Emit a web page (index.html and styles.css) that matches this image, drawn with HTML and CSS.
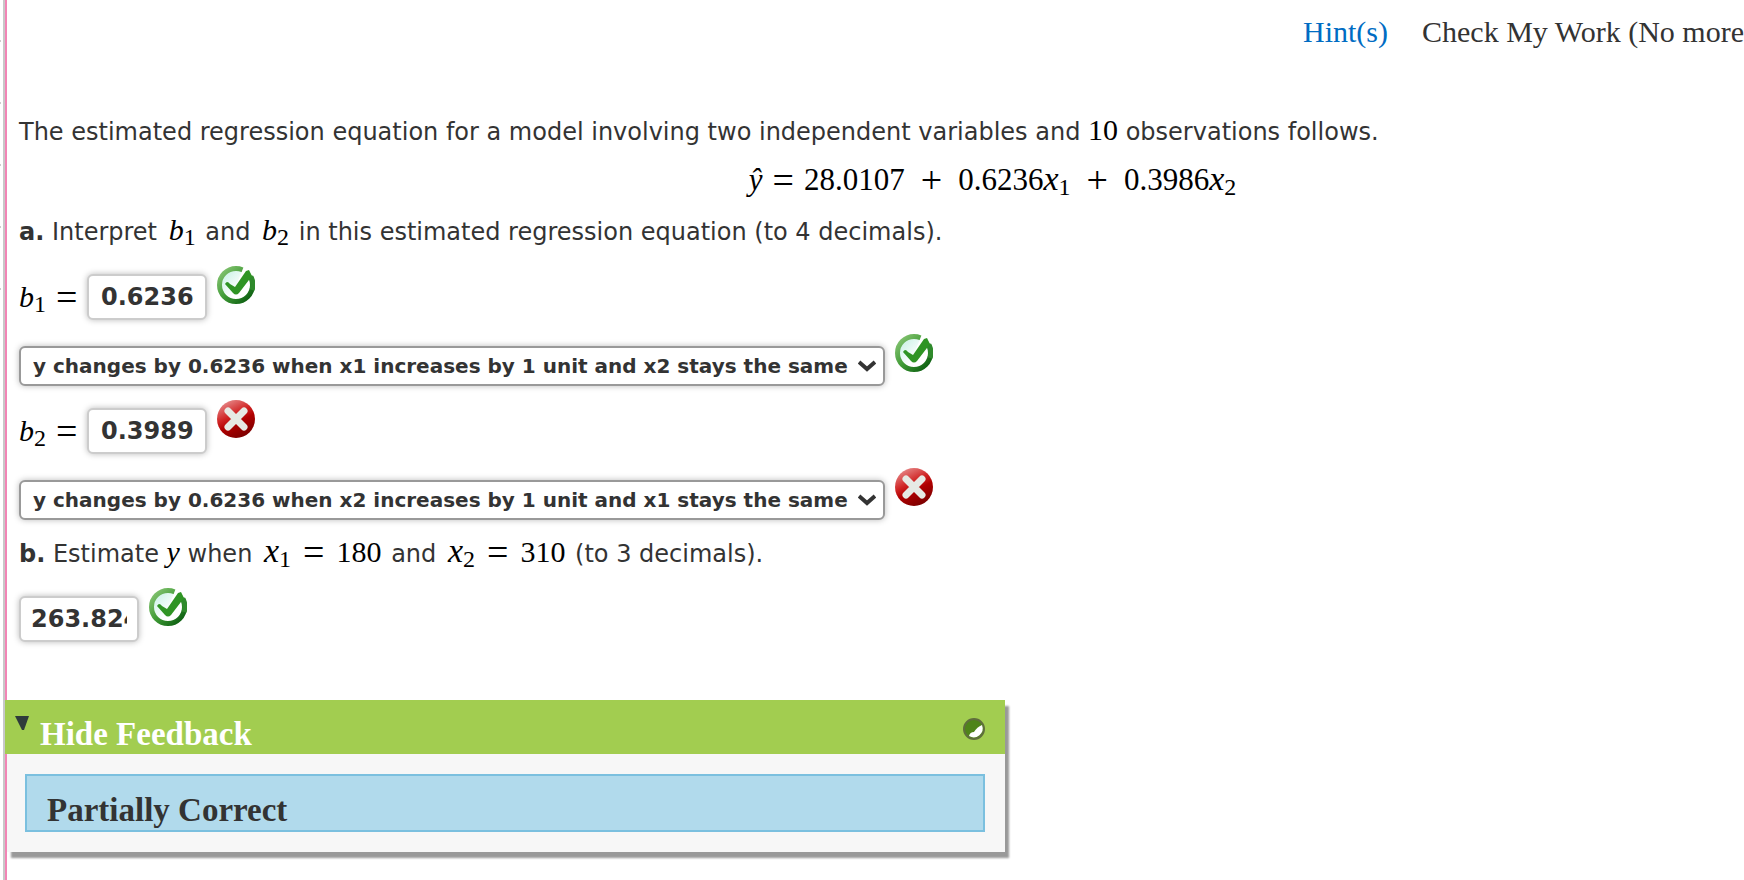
FILE: index.html
```
<!DOCTYPE html>
<html lang="en">
<head>
  <meta charset="UTF-8">
  <title>Regression Equation - Check My Work</title>
  <link rel="stylesheet" href="styles.css">
</head>
<body>

<!-- shared icon shapes -->
<svg class="defs" aria-hidden="true">
  <defs>
    <linearGradient id="greenRing" x1="0" y1="0" x2="1" y2="1">
      <stop offset="0" stop-color="#8cc878"/>
      <stop offset="0.5" stop-color="#3f9a35"/>
      <stop offset="1" stop-color="#05560c"/>
    </linearGradient>
    <linearGradient id="mint" x1="0" y1="0" x2="1" y2="1">
      <stop offset="0" stop-color="#bdeee0"/>
      <stop offset="0.6" stop-color="#ffffff"/>
    </linearGradient>
    <linearGradient id="redBall" x1="0.2" y1="0" x2="0.7" y2="1">
      <stop offset="0" stop-color="#e89090"/>
      <stop offset="0.4" stop-color="#d02424"/>
      <stop offset="0.6" stop-color="#b00000"/>
      <stop offset="1" stop-color="#780000"/>
    </linearGradient>
    <symbol id="right" viewBox="0 0 38 38">
      <circle cx="19" cy="19" r="16.5" fill="url(#mint)" stroke="url(#greenRing)" stroke-width="5"/>
      <path d="M27 0L38 0L38 6L35 9L22 25L19 20Z" fill="#fff"/>
      <path d="M34 11A17 17 0 0 1 35 24" fill="none" stroke="#2f8a2c" stroke-width="5"/>
      <path d="M8 18Q10 14 13 18L18 21L29 5L32 4L35 10L22 27Q19 30 16 27Z" fill="#2f9424"/>
    </symbol>
    <symbol id="wrong" viewBox="0 0 38 38">
      <circle cx="19" cy="19" r="19" fill="url(#redBall)"/>
      <path d="M11 11L27 27M27 11L11 27" stroke="#e6eae4" stroke-width="7" stroke-linecap="round"/>
    </symbol>
  </defs>
</svg>

<div class="page">
  <div class="gutter"></div>

  <main class="content">
    <header class="toolbar">
      <a href="#">Hint(s)</a>
      <span>Check My Work (No more</span>
    </header>

    <form class="question">
      <p>The estimated regression equation for a model involving two independent variables and <span class="math">10</span> observations follows.</p>
      <p class="equation math"><i>ŷ</i><span class="eq">=</span>28.0107<span class="op">+</span>0.6236<i class="x">x</i><sub>1</sub><span class="op">+</span>0.3986<i class="x">x</i><sub>2</sub></p>
      <p><b>a.</b> Interpret <span class="math term"><i>b</i><sub>1</sub></span> and <span class="math term"><i>b</i><sub>2</sub></span> in this estimated regression equation (to 4 decimals).</p>

      <div class="answers">
        <div class="row">
          <label class="math" for="b1"><i>b</i><sub>1</sub><span class="eq">=</span></label>
          <input type="text" id="b1" value="0.6236">
          <svg class="mark" role="img" aria-label="Correct"><use href="#right"/></svg>
        </div>
        <div class="row">
          <div class="select-box">
            <select aria-label="Interpretation of b1">
              <option>y changes by 0.6236 when x1 increases by 1 unit and x2 stays the same</option>
            </select>
            <svg class="chevron" viewBox="0 0 18 12"><path d="M1 2L9 9L17 2"/></svg>
          </div>
          <svg class="mark" role="img" aria-label="Correct"><use href="#right"/></svg>
        </div>
        <div class="row">
          <label class="math" for="b2"><i>b</i><sub>2</sub><span class="eq">=</span></label>
          <input type="text" id="b2" value="0.3989">
          <svg class="mark" role="img" aria-label="Incorrect"><use href="#wrong"/></svg>
        </div>
        <div class="row">
          <div class="select-box">
            <select aria-label="Interpretation of b2">
              <option>y changes by 0.6236 when x2 increases by 1 unit and x1 stays the same</option>
            </select>
            <svg class="chevron" viewBox="0 0 18 12"><path d="M1 2L9 9L17 2"/></svg>
          </div>
          <svg class="mark" role="img" aria-label="Incorrect"><use href="#wrong"/></svg>
        </div>
      </div>

      <p><b>b.</b> Estimate <i class="math">y</i> when <span class="math term"><i class="x">x</i><sub>1</sub><span class="eq">=</span>180</span> and <span class="math term"><i class="x">x</i><sub>2</sub><span class="eq">=</span>310</span> (to 3 decimals).</p>

      <div class="answers">
        <div class="row">
          <input type="text" aria-label="Estimate of y" value="263.824">
          <svg class="mark" role="img" aria-label="Correct"><use href="#right"/></svg>
        </div>
      </div>
    </form>

    <section class="feedback">
      <button type="button" class="feedback-head">
        <svg class="arrow" viewBox="0 0 14 14"><path d="M0 0H14L9 14H7Z"/></svg>
        <span>Hide Feedback</span>
        <svg class="partial" viewBox="0 0 22 22">
          <circle cx="11" cy="11" r="10" fill="#4f8419" stroke="#5f6e3c" stroke-width="2"/>
          <path d="M19 7A9 9 0 0 1 6 18Q7 14 11 14Q14 9 19 7Z" fill="#fff"/>
        </svg>
      </button>
      <div class="feedback-body">
        <h3>Partially Correct</h3>
      </div>
    </section>
  </main>
</div>

</body>
</html>
```
FILE: styles.css
```
* {
  box-sizing: border-box;
}

body {
  margin: 0;
  background: #fff;
  color: #333;
  font-family: Verdana, "DejaVu Sans", sans-serif;
  font-size: 24px;
  overflow: hidden;
}

.defs {
  position: absolute;
  width: 0;
  height: 0;
}

.page {
  display: flex;
  min-height: 100vh;
}

.gutter {
  width: 7px;
  border-right: 2px solid #f285b5;
  background:
    linear-gradient(#c8c8c8, #c8c8c8) 3px 0 / 2px 100% no-repeat;
}

/* small ruler ticks down the edge */
.gutter::before {
  content: "";
  display: block;
  width: 1px;
  height: 310px;
  background: linear-gradient(transparent 40px, #ccc 40px, #ccc 42px, transparent 42px) 0 0 / 1px 62px;
}

.content {
  flex: 1;
  min-width: 0;
}

.toolbar {
  display: flex;
  justify-content: flex-end;
  gap: 34px;
  height: 107px;
  padding-top: 14px;
  font-family: Georgia, "Liberation Serif", serif;
  font-size: 30px;
  line-height: 36px;
  white-space: nowrap;
}

.toolbar a {
  color: #006cc3;
  text-decoration: none;
}

.question {
  padding-left: 12px;
}

.question p {
  margin: 0;
  line-height: 50px;
  white-space: nowrap;
}

.math {
  color: #000;
  font-family: "Liberation Serif", serif;
  font-size: 30px;
  line-height: 0;
}

.question .equation {
  padding: 0 0 4px 222px;
  font-size: 31px;
  line-height: 46px;
  text-align: center;
}

.x {
  font-size: 34px;
  line-height: 0;
}

.term {
  margin: 0 2px 0 4px;
}

sub {
  font-size: 24px;
  line-height: 0;
  vertical-align: -5px;
}

.eq,
.op {
  display: inline-block;
  font-size: 38px;
  line-height: 0;
  vertical-align: -3px;
}

.eq {
  margin: 0 10px;
}

.term .eq {
  margin: 0 12px;
}

.op {
  margin: 0 16px;
}

.answers {
  display: flex;
  flex-direction: column;
  gap: 14px;
  padding: 9px 0;
}

.row {
  display: flex;
  align-items: flex-end;
  gap: 10px;
}

.row label {
  width: 58px;
  line-height: 46px;
  white-space: nowrap;
}

.row input {
  width: 120px;
  height: 46px;
  padding: 0 10px;
  border: 2px solid #ccc;
  border-radius: 6px;
  box-shadow: 0 0 6px #bbb;
  color: #333;
  font: bold 24px Verdana, "DejaVu Sans", sans-serif;
}

.row label + input {
  padding: 0 8px 0 12px;
}

.mark {
  width: 38px;
  height: 38px;
  margin-bottom: 16px;
}

.select-box + .mark {
  margin-bottom: 14px;
}

.select-box {
  position: relative;
}

select {
  display: block;
  width: 866px;
  height: 40px;
  padding: 0 12px;
  appearance: none;
  border: 2px solid #999;
  border-radius: 6px;
  background: #fff;
  box-shadow: 0 0 6px #bbb;
  color: #333;
  font: bold 20px Verdana, "DejaVu Sans", sans-serif;
}

.chevron {
  position: absolute;
  top: 14px;
  right: 9px;
  width: 18px;
  height: 12px;
  fill: none;
  stroke: #333;
  stroke-width: 4;
  pointer-events: none;
}

.feedback {
  width: 998px;
  margin-top: 49px;
  background: #f7f7f7;
  box-shadow: 4px 6px 2px #999;
  font-family: Georgia, "Liberation Serif", serif;
}

.feedback-head {
  display: flex;
  width: 1000px;
  height: 54px;
  margin-left: -2px;
  padding: 16px 20px 0 10px;
  border: 0;
  background: #a2cd50;
  color: #fff;
  font: bold 33px/36px Georgia, "Liberation Serif", serif;
}

.arrow {
  width: 14px;
  height: 14px;
  margin-right: 11px;
  fill: #2f3b3b;
}

.partial {
  width: 22px;
  height: 22px;
  margin-left: auto;
  margin-top: 2px;
}

.feedback-body {
  padding: 20px 20px 20px 18px;
}

.feedback-body h3 {
  margin: 0;
  padding: 16px 20px 2px;
  border: 2px solid #7bc0df;
  background: #b1daec;
  font-size: 33px;
  line-height: 36px;
}
```
